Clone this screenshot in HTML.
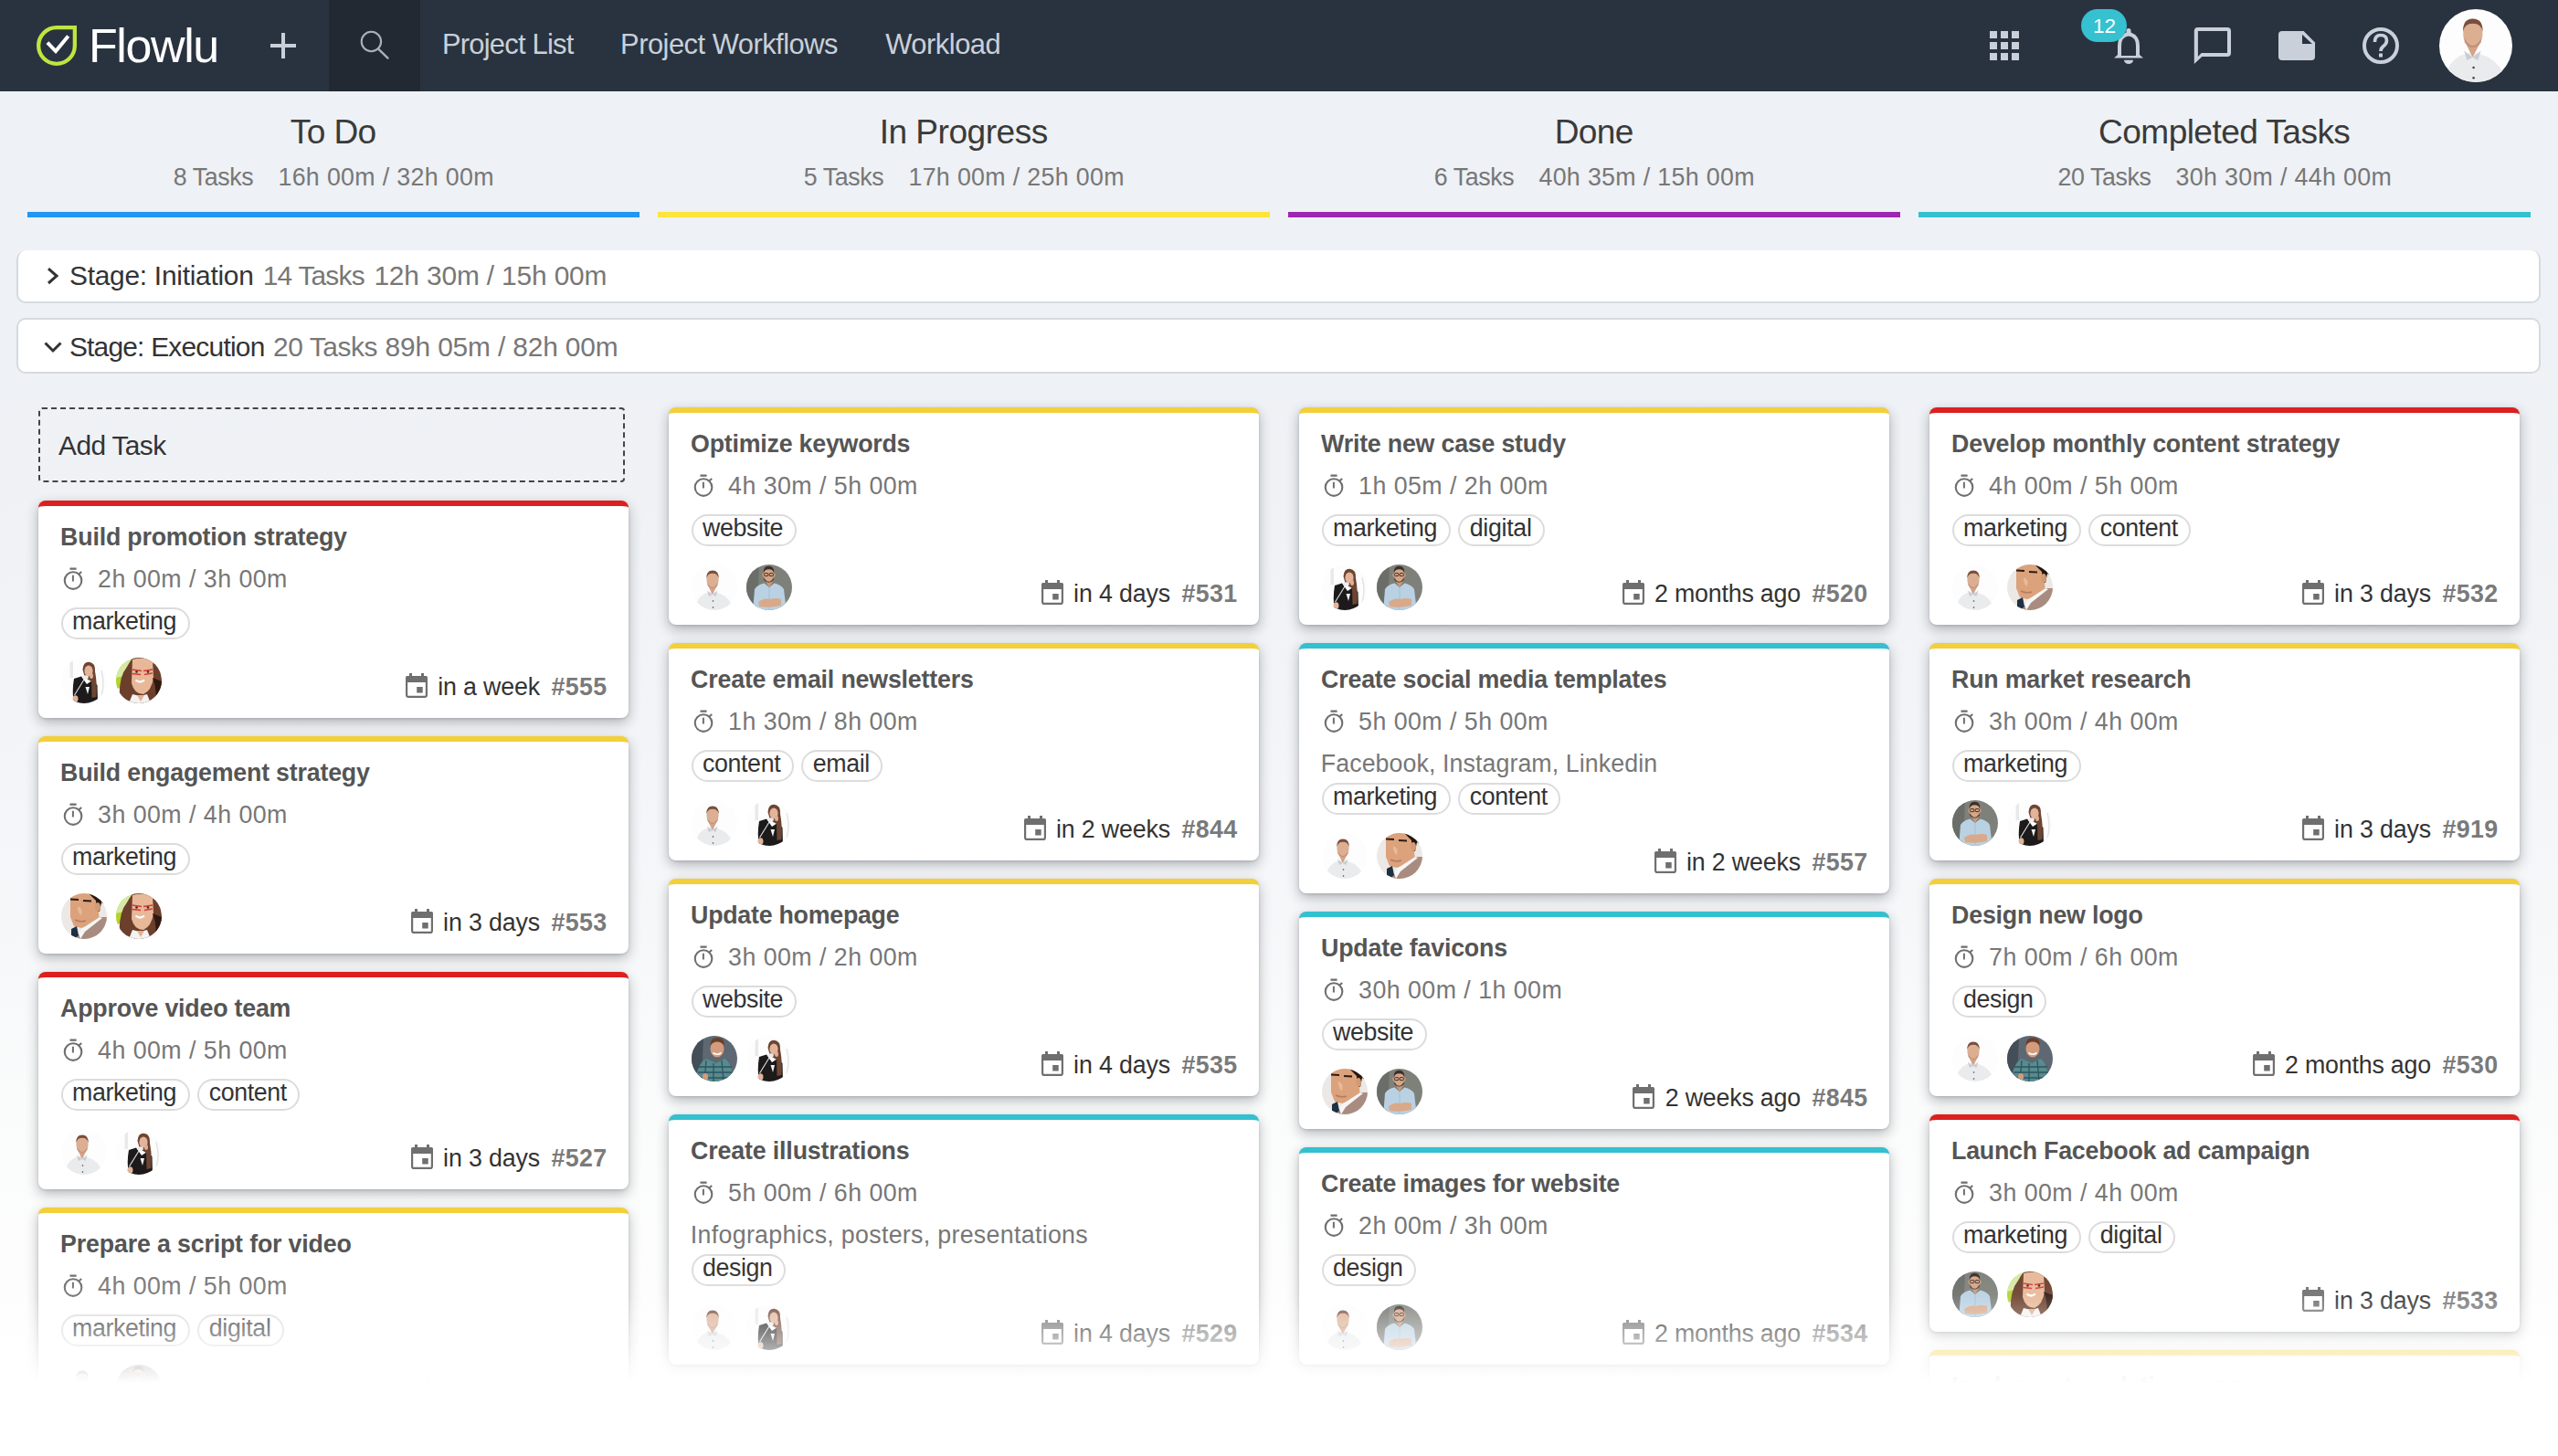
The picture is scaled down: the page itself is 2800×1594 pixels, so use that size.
<!DOCTYPE html>
<html><head><meta charset="utf-8"><title>Flowlu</title>
<style>
*{margin:0;padding:0;box-sizing:border-box}
html,body{width:2800px;height:1594px;overflow:hidden}
body{position:relative;font-family:"Liberation Sans",sans-serif;
 background:linear-gradient(to bottom,#eef1f5 0px,#eef1f5 400px,#f1f3f6 700px,#f6f7f9 1000px,#fafbfb 1200px,#fdfdfd 1400px,#ffffff 1500px)}
.t{position:absolute;line-height:1;white-space:nowrap}
.ic{position:absolute;overflow:visible}
.nav{position:absolute;left:0;top:0;width:2800px;height:100px;background:#29333f}
.search{position:absolute;left:360px;top:0;width:100px;height:100px;background:#222933}
.line{position:absolute;top:232px;height:6px;width:670px}
.stage{position:absolute;left:18px;width:2763px;background:#fff;border:2px solid #d6dadf;border-radius:10px}
.card{position:absolute;width:646px;background:#fff;border-radius:8px;border-top:6px solid;
 box-shadow:0 5px 14px rgba(20,25,35,.3),0 1px 3px rgba(20,25,35,.15)}
.tag{position:absolute;height:35px;border:2px solid #dcdcdc;border-radius:18px;font-size:26px;line-height:26px;color:#333;padding-left:10.5px;white-space:nowrap}
.av{position:absolute}
.fade{position:absolute;left:0;top:1380px;width:2800px;height:214px;
 background:linear-gradient(to bottom,rgba(255,255,255,0) 0px,rgba(255,255,255,.08) 38px,rgba(255,255,255,.5) 83px,rgba(255,255,255,.82) 114px,#fff 134px)}
</style></head><body>

<svg width="0" height="0" style="position:absolute">
<defs>
<clipPath id="cc"><circle cx="25" cy="25" r="25"/></clipPath>
<symbol id="avA" viewBox="0 0 50 50"><g clip-path="url(#cc)">
 <rect width="50" height="50" fill="#fdfdfd"/>
 <path d="M3,52 Q5,36 15,31.5 L22.5,29.5 L30,31.5 Q42,35 47,52 Z" fill="#e9ebed"/>
 <path d="M18.5,24 L22.8,33 L27.5,24 Z" fill="#d4a286"/>
 <path d="M17,28.5 L22.8,33 L19,35 Z M28.5,28.5 L22.8,33 L26.5,35 Z" fill="#c9cdd1"/>
 <ellipse cx="23" cy="16.8" rx="6.6" ry="9.6" fill="#dcae92"/>
 <path d="M16.3,15.5 Q16,6.5 23,6.5 Q30,6.5 29.7,15.5 Q28.8,9.8 23,9.8 Q17.2,9.8 16.3,15.5 Z" fill="#7a4e3c"/>
 <path d="M17.2,20 Q23,30 28.8,20 L28.6,23 Q23,29.5 17.4,23 Z" fill="#a8765e" opacity=".55"/>
 <circle cx="23.5" cy="40" r=".8" fill="#444"/><circle cx="23.5" cy="47" r=".8" fill="#444"/>
</g></symbol>
<symbol id="avB" viewBox="0 0 50 50"><g clip-path="url(#cc)">
 <rect width="50" height="50" fill="#fdfdfd"/>
 <rect x="9.5" y="0" width="3.5" height="22" fill="#e9e9ea"/>
 <path d="M44,14 Q48,28 44,42" stroke="#e4e4e6" stroke-width="1.5" fill="none"/>
 <path d="M14,23 L22,20.5 L28,29 L34,25 L39.5,30 L40,50 L14,50 Q11.5,37 14,23 Z" fill="#1c1a1a"/>
 <path d="M23.5,13 Q24,4.5 30.5,4.8 Q37.5,5.5 37,15 Q39.5,28 38.5,43 L33.5,44 L33,26 L26,22 Z" fill="#6d4533"/>
 <ellipse cx="30" cy="14.5" rx="4.6" ry="6" fill="#e3b49a"/>
 <path d="M26.5,32 L29,40 L31,32 Z" fill="#f2f2f2"/>
 <ellipse cx="26.5" cy="21.5" rx="3.3" ry="2.3" fill="#ececec"/>
 <ellipse cx="33" cy="20" rx="2" ry="3" fill="#dfae94"/>
 <path d="M25,24 L14.5,41" stroke="#e2e2e2" stroke-width="1.1"/>
 <ellipse cx="15.5" cy="45" rx="3" ry="3.8" fill="#e2b49a"/>
</g></symbol>
<symbol id="avC" viewBox="0 0 50 50"><g clip-path="url(#cc)">
 <rect width="50" height="50" fill="#efefef"/>
 <path d="M0,0 L19,0 L16,14 L10,32 L0,34 Z" fill="#b4d22a"/>
 <path d="M0,0 L19,0 L17,10 L8,20 L0,22 Z" fill="#d6e9a4"/>
 <path d="M4,50 Q2,22 12,10 Q17,1 19,0 L41,0 Q51,10 50,30 L49,50 Z" fill="#6b3f2c"/>
 <path d="M18,2 Q29,-1 40,3 L41,22 Q39,36 30,40 Q20,40 17,28 Z" fill="#e8b898"/>
 <path d="M17.5,13 L28,14.5 M30,14.5 L40,13 M17.5,17.5 L27,18.5 M31,18.5 L40,17" stroke="#d63a38" stroke-width="1.4"/>
 <circle cx="22.5" cy="15.5" r="1.3" fill="#3a2a24"/><circle cx="35" cy="15.5" r="1.3" fill="#3a2a24"/>
 <path d="M21.5,24.5 Q26,28.5 31,24.5" stroke="#fff" stroke-width="2.2" fill="none"/>
 <path d="M40,22 Q46,36 42,50 L50,50 L50,26 Z" fill="#2e1810"/>
 <path d="M14,50 L18,40 L26,42 L34,40 L38,50 Z" fill="#f3f3f3"/>
 <path d="M23,41 L27,48 L31,41 Z" fill="#e2b090"/>
</g></symbol>
<symbol id="avD" viewBox="0 0 50 50"><g clip-path="url(#cc)">
 <rect width="50" height="50" fill="#ece8e5"/>
 <path d="M10,0 L32,0 L40,8 L41.5,26 L34,34 L22,38 L14,36 L10,26 Z" fill="#dba27c"/>
 <path d="M18,14 Q24,16 22,24 Q18,22 18,14 Z" fill="#e9bc98"/>
 <path d="M30,0 L50,0 L50,14 L44,10 L42,20 L39,19 L38,8 Z" fill="#24160f"/>
 <ellipse cx="40" cy="15" rx="3" ry="5" fill="#d49a74"/>
 <path d="M10,6.5 L19,7 M24,8 L33,8.5" stroke="#2e1c14" stroke-width="2.2"/>
 <path d="M15,29 Q21,32 27,30" stroke="#b87a62" stroke-width="1.5" fill="none"/>
 <path d="M16,50 L22,40 L42,26 L50,26 L50,50 Z" fill="#a98c80"/>
 <path d="M19,44 L22,39 L42,26 L45,27 L26,42 L21,50 Z" fill="#f6f6f6"/>
 <path d="M11,39 L17,36 L19,46 L15,50 L11,46 Z" fill="#1e3142"/>
</g></symbol>
<symbol id="avE" viewBox="0 0 50 50"><g clip-path="url(#cc)">
 <rect width="50" height="50" fill="#7e807a"/>
 <path d="M0,0 L14,0 L12,50 L0,50 Z" fill="#6b6d69"/>
 <path d="M7,52 L9,27 Q12,22 19.5,20.5 L25,25 L30.5,20.5 Q38,22 41,27 L44,52 Z" fill="#b9d1e2"/>
 <path d="M25,25 L25,50" stroke="#9fbcd0" stroke-width=".8"/>
 <path d="M21,18.5 L25,25 L29,18.5 Z" fill="#c99a7c"/>
 <ellipse cx="18.6" cy="11.5" rx="1.3" ry="2.2" fill="#c99474"/><ellipse cx="30.4" cy="11.5" rx="1.3" ry="2.2" fill="#c99474"/>
 <ellipse cx="24.5" cy="11" rx="5.6" ry="8.4" fill="#d6a586"/>
 <path d="M18.8,9.5 Q18.2,1.8 24.5,1.8 Q30.8,1.8 30.2,9.5 Q29,5.2 24.5,5.2 Q20,5.2 18.8,9.5 Z" fill="#3b2f29"/>
 <path d="M19.3,14.5 Q24.5,23 29.7,14.5 L29.8,17 Q24.5,22.5 19.2,17 Z" fill="#54423a"/>
 <rect x="19.6" y="9.6" width="4.2" height="3" rx=".8" fill="none" stroke="#2a2422" stroke-width=".9"/>
 <rect x="25.2" y="9.6" width="4.2" height="3" rx=".8" fill="none" stroke="#2a2422" stroke-width=".9"/>
 <path d="M13,41 Q20,36 26,38 Q32,36 38,38 L38,45 Q25,48 14,46 Z" fill="#d9a98a"/>
</g></symbol>
<symbol id="avF" viewBox="0 0 50 50"><g clip-path="url(#cc)">
 <rect width="50" height="50" fill="#5d6873"/>
 <path d="M0,0 L13,0 L11,50 L0,50 Z" fill="#434e58"/>
 <path d="M4,52 Q6,30 16,25 L27,30 L36,25 Q44,28 46,52 Z" fill="#578b8d"/>
 <path d="M8,34 L44,34 M7,40 L45,40 M7,46 L45,46 M16,27 L14,50 M24,30 L24,50 M33,27 L35,50" stroke="#2f5362" stroke-width="1.3"/>
 <ellipse cx="28" cy="14" rx="7.5" ry="9.5" fill="#d39c7c"/>
 <path d="M20.5,11 Q20,2 28.5,2 Q37,2.5 35.5,11 Q33,6.5 28,6.5 Q23,6.5 20.5,11 Z" fill="#6a3f28"/>
 <path d="M23.5,18.5 Q28,22 32.5,18.5" stroke="#fff" stroke-width="1.6" fill="none"/>
 <ellipse cx="15" cy="45" rx="3" ry="4" fill="#d39c7c"/>
</g></symbol>
</defs></svg>
<div class="nav"></div><div class="search"></div>
<svg class="ic" style="left:40px;top:28px" width="44" height="44" viewBox="0 0 44 44"><path d="M22,2.15 L41.85,2.15 L41.85,22 A19.85,19.85 0 1 1 22,2.15 Z" fill="none" stroke="#bde640" stroke-width="4.3"/><path d="M11.9,18.7 L21,28.1 L34.7,11.4" fill="none" stroke="#fff" stroke-width="4"/></svg>
<div class="t" style="left:97.0px;top:23.8px;font-size:52.00px;letter-spacing:-1.40px;color:#fff;">Flowlu</div>
<div style="position:absolute;left:296px;top:48px;width:28px;height:4px;background:#c9d0d9"></div><div style="position:absolute;left:308px;top:36px;width:4px;height:28px;background:#c9d0d9"></div>
<svg class="ic" style="left:380px;top:20px" width="60" height="60" viewBox="380 20 60 60"><circle cx="406.4" cy="45.5" r="10.7" fill="none" stroke="#a9b2bc" stroke-width="2.1"/><path d="M414.2,53.6 L424.5,63.6" stroke="#a9b2bc" stroke-width="2.3" stroke-linecap="round"/></svg>
<div class="t" style="left:484.0px;top:34.4px;font-size:30.90px;letter-spacing:-0.77px;color:#c9d0da;">Project List</div>
<div class="t" style="left:679.1px;top:34.4px;font-size:30.90px;letter-spacing:-0.52px;color:#c9d0da;">Project Workflows</div>
<div class="t" style="left:969.2px;top:34.4px;font-size:30.90px;letter-spacing:-0.48px;color:#c9d0da;">Workload</div>
<svg class="ic" style="left:0;top:0" width="2800" height="100" viewBox="0 0 2800 100"><rect x="2178" y="34" width="8" height="8" fill="#c9d0da"/><rect x="2178" y="46" width="8" height="8" fill="#c9d0da"/><rect x="2178" y="58" width="8" height="8" fill="#c9d0da"/><rect x="2190" y="34" width="8" height="8" fill="#c9d0da"/><rect x="2190" y="46" width="8" height="8" fill="#c9d0da"/><rect x="2190" y="58" width="8" height="8" fill="#c9d0da"/><rect x="2202" y="34" width="8" height="8" fill="#c9d0da"/><rect x="2202" y="46" width="8" height="8" fill="#c9d0da"/><rect x="2202" y="58" width="8" height="8" fill="#c9d0da"/><path d="M2330,31 a2.5,2.5 0 0 1 2.5,2.5 v2 Q2342,39 2342,50 v10 l4,3.5 h-32 l4,-3.5 v-10 Q2318,39 2327.5,35.5 v-2 A2.5,2.5 0 0 1 2330,31 Z" fill="#c9d0da"/><path d="M2330,39.5 Q2338,40.5 2338,50 v11 h-16 v-11 Q2322,40.5 2330,39.5 Z" fill="#29333f"/><path d="M2325,65.7 h10 a5,4.3 0 0 1 -10,0 Z" fill="#c9d0da"/><path fill-rule="evenodd" d="M2401.8,70.1 L2401.8,34 Q2401.8,30 2405.8,30 L2438,30 Q2442,30 2442,34 L2442,57.9 Q2442,61.9 2438,61.9 L2410.3,61.9 Z M2405.9,62 L2405.9,34 L2438,34 L2438,58.1 L2409.7,58.1 Z" fill="#c9d0da"/><path d="M2498,34 H2521.6 L2534,46.4 V62 a4,4 0 0 1 -4,4 H2498 a4,4 0 0 1 -4,-4 V38 a4,4 0 0 1 4,-4 Z" fill="#c9d0da"/><path d="M2520,37.8 V47.9 H2530.9 Z" fill="#29333f"/><circle cx="2606" cy="50" r="18" fill="none" stroke="#c9d0da" stroke-width="4"/><path d="M2599.5,46 Q2599.5,38.5 2606,38.5 Q2612.5,38.5 2612.5,44.5 Q2612.5,48 2608.5,51 Q2606,53 2606,56" fill="none" stroke="#c9d0da" stroke-width="3.6"/><rect x="2604" y="58.5" width="4" height="4" fill="#c9d0da"/></svg>
<div style="position:absolute;left:2278px;top:10px;width:50px;height:36px;border-radius:18px;background:#35c1d0"></div>
<div class="t" style="left:2291.0px;top:18.2px;font-size:22.50px;letter-spacing:0.00px;color:#fff;">12</div>
<svg class="av" style="left:2670px;top:10px" width="80" height="80" viewBox="0 0 50 50"><use href="#avA"/></svg>
<div class="t" style="left:364.7px;transform:translateX(-50%);top:126.3px;font-size:37.08px;letter-spacing:-0.59px;color:#3a3a3a;">To Do</div>
<div class="t" style="left:189.8px;top:181.4px;font-size:26.78px;letter-spacing:-0.39px;color:#777;">8 Tasks</div>
<div class="t" style="left:304.4px;top:181.4px;font-size:26.78px;letter-spacing:0.35px;color:#777;">16h 00m / 32h 00m</div>
<div class="line" style="left:30px;background:#2196f3"></div>
<div class="t" style="left:1054.7px;transform:translateX(-50%);top:126.3px;font-size:37.08px;letter-spacing:-0.50px;color:#3a3a3a;">In Progress</div>
<div class="t" style="left:879.8px;top:181.4px;font-size:26.78px;letter-spacing:-0.39px;color:#777;">5 Tasks</div>
<div class="t" style="left:994.4px;top:181.4px;font-size:26.78px;letter-spacing:0.35px;color:#777;">17h 00m / 25h 00m</div>
<div class="line" style="left:720px;background:#fde53a"></div>
<div class="t" style="left:1744.7px;transform:translateX(-50%);top:126.3px;font-size:37.08px;letter-spacing:-0.65px;color:#3a3a3a;">Done</div>
<div class="t" style="left:1569.8px;top:181.4px;font-size:26.78px;letter-spacing:-0.39px;color:#777;">6 Tasks</div>
<div class="t" style="left:1684.4px;top:181.4px;font-size:26.78px;letter-spacing:0.35px;color:#777;">40h 35m / 15h 00m</div>
<div class="line" style="left:1410px;background:#9c27b0"></div>
<div class="t" style="left:2434.7px;transform:translateX(-50%);top:126.3px;font-size:37.08px;letter-spacing:-0.56px;color:#3a3a3a;">Completed Tasks</div>
<div class="t" style="left:2252.6px;top:181.4px;font-size:26.78px;letter-spacing:-0.40px;color:#777;">20 Tasks</div>
<div class="t" style="left:2381.6px;top:181.4px;font-size:26.78px;letter-spacing:0.35px;color:#777;">30h 30m / 44h 00m</div>
<div class="line" style="left:2100px;background:#33c1cf"></div>
<div class="stage" style="top:274px;height:58px;border-top:0"></div>
<div class="stage" style="top:348px;height:61px"></div>
<svg class="ic" style="left:0;top:0" width="100" height="420" viewBox="0 0 100 420"><path d="M53,294.2 L62,302.1 L53,310" fill="none" stroke="#333" stroke-width="3"/><path d="M49.5,375.5 L58,384 L66.5,375.5" fill="none" stroke="#333" stroke-width="3"/></svg>
<div class="t" style="left:76.0px;top:286.8px;font-size:29.87px;letter-spacing:-0.25px;color:#333;">Stage: Initiation</div>
<div class="t" style="left:287.8px;top:286.8px;font-size:29.87px;letter-spacing:-0.79px;color:#777;">14 Tasks</div>
<div class="t" style="left:409.4px;top:286.8px;font-size:29.87px;letter-spacing:-0.14px;color:#777;">12h 30m / 15h 00m</div>
<div class="t" style="left:75.9px;top:364.6px;font-size:29.87px;letter-spacing:-0.76px;color:#333;">Stage: Execution</div>
<div class="t" style="left:299.1px;top:364.6px;font-size:29.87px;letter-spacing:-0.44px;color:#777;">20 Tasks</div>
<div class="t" style="left:421.6px;top:364.6px;font-size:29.87px;letter-spacing:-0.14px;color:#777;">89h 05m / 82h 00m</div>
<div style="position:absolute;left:42px;top:445.5px;width:642px;height:82.5px;border:2px dashed #444;border-radius:4px"></div>
<div class="t" style="left:64.1px;top:472.7px;font-size:29.87px;letter-spacing:-0.61px;color:#333;">Add Task</div>
<div class="card" style="left:42px;top:548px;height:238px;border-top-color:#dc1f1f"></div>
<div class="t" style="left:66.1px;top:574.9px;font-size:26.78px;letter-spacing:-0.19px;color:#555;font-weight:700;">Build promotion strategy</div>
<svg class="ic" style="left:67.9px;top:618.5px" width="24" height="28" viewBox="0 0 24 28"><circle cx="12.05" cy="16.55" r="9.3" fill="none" stroke="#6f6f6f" stroke-width="2.1"/><rect x="8.5" y="2.5" width="7.1" height="2.3" fill="#6f6f6f"/><rect x="10.9" y="10.7" width="2" height="6.8" fill="#6f6f6f"/><path d="M18.6,9.3 L21.2,6.9" stroke="#6f6f6f" stroke-width="2.1"/></svg><div class="t" style="left:107.1px;top:621.4px;font-size:26.78px;letter-spacing:0.46px;color:#777;">2h 00m / 3h 00m</div>
<div class="tag" style="left:66.5px;top:664.5px;width:141.2px;font-size:26.78px;letter-spacing:-0.38px">marketing</div>
<svg class="av" style="left:67px;top:720px" width="50" height="50"><use href="#avB"/></svg>
<svg class="av" style="left:127px;top:720px" width="50" height="50"><use href="#avC"/></svg>
<div class="t" style="left:603.5px;top:739.1px;font-size:26.78px;letter-spacing:0.37px;color:#7a7a7a;font-weight:700;">#555</div>
<div class="t" style="left:479.3px;top:739.1px;font-size:26.78px;letter-spacing:-0.17px;color:#333;">in a week</div>
<svg class="ic" style="left:443.8px;top:737.0px" width="24" height="27" viewBox="0 0 24 27"><rect x="1.1" y="4.1" width="21.8" height="21.8" rx="2" fill="none" stroke="#6f6f6f" stroke-width="2.2"/><rect x="0" y="3" width="24" height="7" rx="2" fill="#6f6f6f"/><rect x="4" y="0" width="3" height="4" fill="#6f6f6f"/><rect x="17" y="0" width="3" height="4" fill="#6f6f6f"/><rect x="12.2" y="15" width="6.5" height="6.5" fill="#6f6f6f"/></svg><div class="card" style="left:42px;top:806px;height:238px;border-top-color:#f3cf3a"></div>
<div class="t" style="left:66.1px;top:832.9px;font-size:26.78px;letter-spacing:-0.20px;color:#555;font-weight:700;">Build engagement strategy</div>
<svg class="ic" style="left:67.9px;top:876.5px" width="24" height="28" viewBox="0 0 24 28"><circle cx="12.05" cy="16.55" r="9.3" fill="none" stroke="#6f6f6f" stroke-width="2.1"/><rect x="8.5" y="2.5" width="7.1" height="2.3" fill="#6f6f6f"/><rect x="10.9" y="10.7" width="2" height="6.8" fill="#6f6f6f"/><path d="M18.6,9.3 L21.2,6.9" stroke="#6f6f6f" stroke-width="2.1"/></svg><div class="t" style="left:107.1px;top:879.4px;font-size:26.78px;letter-spacing:0.46px;color:#777;">3h 00m / 4h 00m</div>
<div class="tag" style="left:66.5px;top:922.5px;width:141.2px;font-size:26.78px;letter-spacing:-0.38px">marketing</div>
<svg class="av" style="left:67px;top:978px" width="50" height="50"><use href="#avD"/></svg>
<svg class="av" style="left:127px;top:978px" width="50" height="50"><use href="#avC"/></svg>
<div class="t" style="left:603.5px;top:997.1px;font-size:26.78px;letter-spacing:0.37px;color:#7a7a7a;font-weight:700;">#553</div>
<div class="t" style="left:485.1px;top:997.1px;font-size:26.78px;letter-spacing:-0.15px;color:#333;">in 3 days</div>
<svg class="ic" style="left:449.6px;top:995.0px" width="24" height="27" viewBox="0 0 24 27"><rect x="1.1" y="4.1" width="21.8" height="21.8" rx="2" fill="none" stroke="#6f6f6f" stroke-width="2.2"/><rect x="0" y="3" width="24" height="7" rx="2" fill="#6f6f6f"/><rect x="4" y="0" width="3" height="4" fill="#6f6f6f"/><rect x="17" y="0" width="3" height="4" fill="#6f6f6f"/><rect x="12.2" y="15" width="6.5" height="6.5" fill="#6f6f6f"/></svg><div class="card" style="left:42px;top:1064px;height:238px;border-top-color:#dc1f1f"></div>
<div class="t" style="left:66.1px;top:1090.9px;font-size:26.78px;letter-spacing:-0.21px;color:#555;font-weight:700;">Approve video team</div>
<svg class="ic" style="left:67.9px;top:1134.5px" width="24" height="28" viewBox="0 0 24 28"><circle cx="12.05" cy="16.55" r="9.3" fill="none" stroke="#6f6f6f" stroke-width="2.1"/><rect x="8.5" y="2.5" width="7.1" height="2.3" fill="#6f6f6f"/><rect x="10.9" y="10.7" width="2" height="6.8" fill="#6f6f6f"/><path d="M18.6,9.3 L21.2,6.9" stroke="#6f6f6f" stroke-width="2.1"/></svg><div class="t" style="left:107.1px;top:1137.4px;font-size:26.78px;letter-spacing:0.46px;color:#777;">4h 00m / 5h 00m</div>
<div class="tag" style="left:66.5px;top:1180.5px;width:141.2px;font-size:26.78px;letter-spacing:-0.38px">marketing</div>
<div class="tag" style="left:216.2px;top:1180.5px;width:112.3px;font-size:26.78px;letter-spacing:-0.37px">content</div>
<svg class="av" style="left:67px;top:1236px" width="50" height="50"><use href="#avA"/></svg>
<svg class="av" style="left:127px;top:1236px" width="50" height="50"><use href="#avB"/></svg>
<div class="t" style="left:603.5px;top:1255.1px;font-size:26.78px;letter-spacing:0.37px;color:#7a7a7a;font-weight:700;">#527</div>
<div class="t" style="left:485.1px;top:1255.1px;font-size:26.78px;letter-spacing:-0.15px;color:#333;">in 3 days</div>
<svg class="ic" style="left:449.6px;top:1253.0px" width="24" height="27" viewBox="0 0 24 27"><rect x="1.1" y="4.1" width="21.8" height="21.8" rx="2" fill="none" stroke="#6f6f6f" stroke-width="2.2"/><rect x="0" y="3" width="24" height="7" rx="2" fill="#6f6f6f"/><rect x="4" y="0" width="3" height="4" fill="#6f6f6f"/><rect x="17" y="0" width="3" height="4" fill="#6f6f6f"/><rect x="12.2" y="15" width="6.5" height="6.5" fill="#6f6f6f"/></svg><div class="card" style="left:42px;top:1322px;height:238px;border-top-color:#f3cf3a"></div>
<div class="t" style="left:66.1px;top:1348.9px;font-size:26.78px;letter-spacing:-0.16px;color:#555;font-weight:700;">Prepare a script for video</div>
<svg class="ic" style="left:67.9px;top:1392.5px" width="24" height="28" viewBox="0 0 24 28"><circle cx="12.05" cy="16.55" r="9.3" fill="none" stroke="#6f6f6f" stroke-width="2.1"/><rect x="8.5" y="2.5" width="7.1" height="2.3" fill="#6f6f6f"/><rect x="10.9" y="10.7" width="2" height="6.8" fill="#6f6f6f"/><path d="M18.6,9.3 L21.2,6.9" stroke="#6f6f6f" stroke-width="2.1"/></svg><div class="t" style="left:107.1px;top:1395.4px;font-size:26.78px;letter-spacing:0.46px;color:#777;">4h 00m / 5h 00m</div>
<div class="tag" style="left:66.5px;top:1438.5px;width:141.2px;font-size:26.78px;letter-spacing:-0.38px">marketing</div>
<div class="tag" style="left:216.2px;top:1438.5px;width:94.9px;font-size:26.78px;letter-spacing:-0.29px">digital</div>
<svg class="av" style="left:67px;top:1494px" width="50" height="50"><use href="#avA"/></svg>
<svg class="av" style="left:127px;top:1494px" width="50" height="50"><use href="#avE"/></svg>
<div class="t" style="left:603.5px;top:1513.1px;font-size:26.78px;letter-spacing:0.37px;color:#7a7a7a;font-weight:700;">#528</div>
<div class="t" style="left:485.1px;top:1513.1px;font-size:26.78px;letter-spacing:-0.15px;color:#333;">in 3 days</div>
<svg class="ic" style="left:449.6px;top:1511.0px" width="24" height="27" viewBox="0 0 24 27"><rect x="1.1" y="4.1" width="21.8" height="21.8" rx="2" fill="none" stroke="#6f6f6f" stroke-width="2.2"/><rect x="0" y="3" width="24" height="7" rx="2" fill="#6f6f6f"/><rect x="4" y="0" width="3" height="4" fill="#6f6f6f"/><rect x="17" y="0" width="3" height="4" fill="#6f6f6f"/><rect x="12.2" y="15" width="6.5" height="6.5" fill="#6f6f6f"/></svg><div class="card" style="left:732px;top:446px;height:238px;border-top-color:#f3cf3a"></div>
<div class="t" style="left:756.1px;top:472.9px;font-size:26.78px;letter-spacing:-0.22px;color:#555;font-weight:700;">Optimize keywords</div>
<svg class="ic" style="left:757.9px;top:516.5px" width="24" height="28" viewBox="0 0 24 28"><circle cx="12.05" cy="16.55" r="9.3" fill="none" stroke="#6f6f6f" stroke-width="2.1"/><rect x="8.5" y="2.5" width="7.1" height="2.3" fill="#6f6f6f"/><rect x="10.9" y="10.7" width="2" height="6.8" fill="#6f6f6f"/><path d="M18.6,9.3 L21.2,6.9" stroke="#6f6f6f" stroke-width="2.1"/></svg><div class="t" style="left:797.1px;top:519.4px;font-size:26.78px;letter-spacing:0.46px;color:#777;">4h 30m / 5h 00m</div>
<div class="tag" style="left:756.5px;top:562.5px;width:115.2px;font-size:26.78px;letter-spacing:-0.38px">website</div>
<svg class="av" style="left:757px;top:618px" width="50" height="50"><use href="#avA"/></svg>
<svg class="av" style="left:817px;top:618px" width="50" height="50"><use href="#avE"/></svg>
<div class="t" style="left:1293.5px;top:637.1px;font-size:26.78px;letter-spacing:0.37px;color:#7a7a7a;font-weight:700;">#531</div>
<div class="t" style="left:1175.1px;top:637.1px;font-size:26.78px;letter-spacing:-0.15px;color:#333;">in 4 days</div>
<svg class="ic" style="left:1139.6px;top:635.0px" width="24" height="27" viewBox="0 0 24 27"><rect x="1.1" y="4.1" width="21.8" height="21.8" rx="2" fill="none" stroke="#6f6f6f" stroke-width="2.2"/><rect x="0" y="3" width="24" height="7" rx="2" fill="#6f6f6f"/><rect x="4" y="0" width="3" height="4" fill="#6f6f6f"/><rect x="17" y="0" width="3" height="4" fill="#6f6f6f"/><rect x="12.2" y="15" width="6.5" height="6.5" fill="#6f6f6f"/></svg><div class="card" style="left:732px;top:704px;height:238px;border-top-color:#f3cf3a"></div>
<div class="t" style="left:756.1px;top:730.9px;font-size:26.78px;letter-spacing:-0.18px;color:#555;font-weight:700;">Create email newsletters</div>
<svg class="ic" style="left:757.9px;top:774.5px" width="24" height="28" viewBox="0 0 24 28"><circle cx="12.05" cy="16.55" r="9.3" fill="none" stroke="#6f6f6f" stroke-width="2.1"/><rect x="8.5" y="2.5" width="7.1" height="2.3" fill="#6f6f6f"/><rect x="10.9" y="10.7" width="2" height="6.8" fill="#6f6f6f"/><path d="M18.6,9.3 L21.2,6.9" stroke="#6f6f6f" stroke-width="2.1"/></svg><div class="t" style="left:797.1px;top:777.4px;font-size:26.78px;letter-spacing:0.46px;color:#777;">1h 30m / 8h 00m</div>
<div class="tag" style="left:756.5px;top:820.5px;width:112.3px;font-size:26.78px;letter-spacing:-0.37px">content</div>
<div class="tag" style="left:877.3px;top:820.5px;width:89.1px;font-size:26.78px;letter-spacing:-0.37px">email</div>
<svg class="av" style="left:757px;top:876px" width="50" height="50"><use href="#avA"/></svg>
<svg class="av" style="left:817px;top:876px" width="50" height="50"><use href="#avB"/></svg>
<div class="t" style="left:1293.5px;top:895.1px;font-size:26.78px;letter-spacing:0.37px;color:#7a7a7a;font-weight:700;">#844</div>
<div class="t" style="left:1156.1px;top:895.1px;font-size:26.78px;letter-spacing:-0.17px;color:#333;">in 2 weeks</div>
<svg class="ic" style="left:1120.6px;top:893.0px" width="24" height="27" viewBox="0 0 24 27"><rect x="1.1" y="4.1" width="21.8" height="21.8" rx="2" fill="none" stroke="#6f6f6f" stroke-width="2.2"/><rect x="0" y="3" width="24" height="7" rx="2" fill="#6f6f6f"/><rect x="4" y="0" width="3" height="4" fill="#6f6f6f"/><rect x="17" y="0" width="3" height="4" fill="#6f6f6f"/><rect x="12.2" y="15" width="6.5" height="6.5" fill="#6f6f6f"/></svg><div class="card" style="left:732px;top:962px;height:238px;border-top-color:#f3cf3a"></div>
<div class="t" style="left:756.1px;top:988.9px;font-size:26.78px;letter-spacing:-0.25px;color:#555;font-weight:700;">Update homepage</div>
<svg class="ic" style="left:757.9px;top:1032.5px" width="24" height="28" viewBox="0 0 24 28"><circle cx="12.05" cy="16.55" r="9.3" fill="none" stroke="#6f6f6f" stroke-width="2.1"/><rect x="8.5" y="2.5" width="7.1" height="2.3" fill="#6f6f6f"/><rect x="10.9" y="10.7" width="2" height="6.8" fill="#6f6f6f"/><path d="M18.6,9.3 L21.2,6.9" stroke="#6f6f6f" stroke-width="2.1"/></svg><div class="t" style="left:797.1px;top:1035.4px;font-size:26.78px;letter-spacing:0.46px;color:#777;">3h 00m / 2h 00m</div>
<div class="tag" style="left:756.5px;top:1078.5px;width:115.2px;font-size:26.78px;letter-spacing:-0.38px">website</div>
<svg class="av" style="left:757px;top:1134px" width="50" height="50"><use href="#avF"/></svg>
<svg class="av" style="left:817px;top:1134px" width="50" height="50"><use href="#avB"/></svg>
<div class="t" style="left:1293.5px;top:1153.1px;font-size:26.78px;letter-spacing:0.37px;color:#7a7a7a;font-weight:700;">#535</div>
<div class="t" style="left:1175.1px;top:1153.1px;font-size:26.78px;letter-spacing:-0.15px;color:#333;">in 4 days</div>
<svg class="ic" style="left:1139.6px;top:1151.0px" width="24" height="27" viewBox="0 0 24 27"><rect x="1.1" y="4.1" width="21.8" height="21.8" rx="2" fill="none" stroke="#6f6f6f" stroke-width="2.2"/><rect x="0" y="3" width="24" height="7" rx="2" fill="#6f6f6f"/><rect x="4" y="0" width="3" height="4" fill="#6f6f6f"/><rect x="17" y="0" width="3" height="4" fill="#6f6f6f"/><rect x="12.2" y="15" width="6.5" height="6.5" fill="#6f6f6f"/></svg><div class="card" style="left:732px;top:1220px;height:274px;border-top-color:#33c0cf"></div>
<div class="t" style="left:756.1px;top:1246.9px;font-size:26.78px;letter-spacing:-0.15px;color:#555;font-weight:700;">Create illustrations</div>
<svg class="ic" style="left:757.9px;top:1290.5px" width="24" height="28" viewBox="0 0 24 28"><circle cx="12.05" cy="16.55" r="9.3" fill="none" stroke="#6f6f6f" stroke-width="2.1"/><rect x="8.5" y="2.5" width="7.1" height="2.3" fill="#6f6f6f"/><rect x="10.9" y="10.7" width="2" height="6.8" fill="#6f6f6f"/><path d="M18.6,9.3 L21.2,6.9" stroke="#6f6f6f" stroke-width="2.1"/></svg><div class="t" style="left:797.1px;top:1293.4px;font-size:26.78px;letter-spacing:0.46px;color:#777;">5h 00m / 6h 00m</div>
<div class="t" style="left:755.8px;top:1338.9px;font-size:26.78px;letter-spacing:0.31px;color:#777;">Infographics, posters, presentations</div>
<div class="tag" style="left:756.5px;top:1372.5px;width:103.6px;font-size:26.78px;letter-spacing:-0.38px">design</div>
<svg class="av" style="left:757px;top:1428px" width="50" height="50"><use href="#avA"/></svg>
<svg class="av" style="left:817px;top:1428px" width="50" height="50"><use href="#avB"/></svg>
<div class="t" style="left:1293.5px;top:1447.1px;font-size:26.78px;letter-spacing:0.37px;color:#7a7a7a;font-weight:700;">#529</div>
<div class="t" style="left:1175.1px;top:1447.1px;font-size:26.78px;letter-spacing:-0.15px;color:#333;">in 4 days</div>
<svg class="ic" style="left:1139.6px;top:1445.0px" width="24" height="27" viewBox="0 0 24 27"><rect x="1.1" y="4.1" width="21.8" height="21.8" rx="2" fill="none" stroke="#6f6f6f" stroke-width="2.2"/><rect x="0" y="3" width="24" height="7" rx="2" fill="#6f6f6f"/><rect x="4" y="0" width="3" height="4" fill="#6f6f6f"/><rect x="17" y="0" width="3" height="4" fill="#6f6f6f"/><rect x="12.2" y="15" width="6.5" height="6.5" fill="#6f6f6f"/></svg><div class="card" style="left:1422px;top:446px;height:238px;border-top-color:#f3cf3a"></div>
<div class="t" style="left:1446.1px;top:472.9px;font-size:26.78px;letter-spacing:-0.20px;color:#555;font-weight:700;">Write new case study</div>
<svg class="ic" style="left:1447.9px;top:516.5px" width="24" height="28" viewBox="0 0 24 28"><circle cx="12.05" cy="16.55" r="9.3" fill="none" stroke="#6f6f6f" stroke-width="2.1"/><rect x="8.5" y="2.5" width="7.1" height="2.3" fill="#6f6f6f"/><rect x="10.9" y="10.7" width="2" height="6.8" fill="#6f6f6f"/><path d="M18.6,9.3 L21.2,6.9" stroke="#6f6f6f" stroke-width="2.1"/></svg><div class="t" style="left:1487.1px;top:519.4px;font-size:26.78px;letter-spacing:0.46px;color:#777;">1h 05m / 2h 00m</div>
<div class="tag" style="left:1446.5px;top:562.5px;width:141.2px;font-size:26.78px;letter-spacing:-0.38px">marketing</div>
<div class="tag" style="left:1596.2px;top:562.5px;width:94.9px;font-size:26.78px;letter-spacing:-0.29px">digital</div>
<svg class="av" style="left:1447px;top:618px" width="50" height="50"><use href="#avB"/></svg>
<svg class="av" style="left:1507px;top:618px" width="50" height="50"><use href="#avE"/></svg>
<div class="t" style="left:1983.5px;top:637.1px;font-size:26.78px;letter-spacing:0.37px;color:#7a7a7a;font-weight:700;">#520</div>
<div class="t" style="left:1811.0px;top:637.1px;font-size:26.78px;letter-spacing:-0.19px;color:#333;">2 months ago</div>
<svg class="ic" style="left:1775.5px;top:635.0px" width="24" height="27" viewBox="0 0 24 27"><rect x="1.1" y="4.1" width="21.8" height="21.8" rx="2" fill="none" stroke="#6f6f6f" stroke-width="2.2"/><rect x="0" y="3" width="24" height="7" rx="2" fill="#6f6f6f"/><rect x="4" y="0" width="3" height="4" fill="#6f6f6f"/><rect x="17" y="0" width="3" height="4" fill="#6f6f6f"/><rect x="12.2" y="15" width="6.5" height="6.5" fill="#6f6f6f"/></svg><div class="card" style="left:1422px;top:704px;height:274px;border-top-color:#33c0cf"></div>
<div class="t" style="left:1446.1px;top:730.9px;font-size:26.78px;letter-spacing:-0.19px;color:#555;font-weight:700;">Create social media templates</div>
<svg class="ic" style="left:1447.9px;top:774.5px" width="24" height="28" viewBox="0 0 24 28"><circle cx="12.05" cy="16.55" r="9.3" fill="none" stroke="#6f6f6f" stroke-width="2.1"/><rect x="8.5" y="2.5" width="7.1" height="2.3" fill="#6f6f6f"/><rect x="10.9" y="10.7" width="2" height="6.8" fill="#6f6f6f"/><path d="M18.6,9.3 L21.2,6.9" stroke="#6f6f6f" stroke-width="2.1"/></svg><div class="t" style="left:1487.1px;top:777.4px;font-size:26.78px;letter-spacing:0.46px;color:#777;">5h 00m / 5h 00m</div>
<div class="t" style="left:1445.8px;top:822.9px;font-size:26.78px;letter-spacing:0.08px;color:#777;">Facebook, Instagram, Linkedin</div>
<div class="tag" style="left:1446.5px;top:856.5px;width:141.2px;font-size:26.78px;letter-spacing:-0.38px">marketing</div>
<div class="tag" style="left:1596.2px;top:856.5px;width:112.3px;font-size:26.78px;letter-spacing:-0.37px">content</div>
<svg class="av" style="left:1447px;top:912px" width="50" height="50"><use href="#avA"/></svg>
<svg class="av" style="left:1507px;top:912px" width="50" height="50"><use href="#avD"/></svg>
<div class="t" style="left:1983.5px;top:931.1px;font-size:26.78px;letter-spacing:0.37px;color:#7a7a7a;font-weight:700;">#557</div>
<div class="t" style="left:1846.1px;top:931.1px;font-size:26.78px;letter-spacing:-0.17px;color:#333;">in 2 weeks</div>
<svg class="ic" style="left:1810.6px;top:929.0px" width="24" height="27" viewBox="0 0 24 27"><rect x="1.1" y="4.1" width="21.8" height="21.8" rx="2" fill="none" stroke="#6f6f6f" stroke-width="2.2"/><rect x="0" y="3" width="24" height="7" rx="2" fill="#6f6f6f"/><rect x="4" y="0" width="3" height="4" fill="#6f6f6f"/><rect x="17" y="0" width="3" height="4" fill="#6f6f6f"/><rect x="12.2" y="15" width="6.5" height="6.5" fill="#6f6f6f"/></svg><div class="card" style="left:1422px;top:998px;height:238px;border-top-color:#33c0cf"></div>
<div class="t" style="left:1446.1px;top:1024.9px;font-size:26.78px;letter-spacing:-0.20px;color:#555;font-weight:700;">Update favicons</div>
<svg class="ic" style="left:1447.9px;top:1068.5px" width="24" height="28" viewBox="0 0 24 28"><circle cx="12.05" cy="16.55" r="9.3" fill="none" stroke="#6f6f6f" stroke-width="2.1"/><rect x="8.5" y="2.5" width="7.1" height="2.3" fill="#6f6f6f"/><rect x="10.9" y="10.7" width="2" height="6.8" fill="#6f6f6f"/><path d="M18.6,9.3 L21.2,6.9" stroke="#6f6f6f" stroke-width="2.1"/></svg><div class="t" style="left:1487.1px;top:1071.4px;font-size:26.78px;letter-spacing:0.46px;color:#777;">30h 00m / 1h 00m</div>
<div class="tag" style="left:1446.5px;top:1114.5px;width:115.2px;font-size:26.78px;letter-spacing:-0.38px">website</div>
<svg class="av" style="left:1447px;top:1170px" width="50" height="50"><use href="#avD"/></svg>
<svg class="av" style="left:1507px;top:1170px" width="50" height="50"><use href="#avE"/></svg>
<div class="t" style="left:1983.5px;top:1189.1px;font-size:26.78px;letter-spacing:0.37px;color:#7a7a7a;font-weight:700;">#845</div>
<div class="t" style="left:1822.8px;top:1189.1px;font-size:26.78px;letter-spacing:-0.20px;color:#333;">2 weeks ago</div>
<svg class="ic" style="left:1787.3px;top:1187.0px" width="24" height="27" viewBox="0 0 24 27"><rect x="1.1" y="4.1" width="21.8" height="21.8" rx="2" fill="none" stroke="#6f6f6f" stroke-width="2.2"/><rect x="0" y="3" width="24" height="7" rx="2" fill="#6f6f6f"/><rect x="4" y="0" width="3" height="4" fill="#6f6f6f"/><rect x="17" y="0" width="3" height="4" fill="#6f6f6f"/><rect x="12.2" y="15" width="6.5" height="6.5" fill="#6f6f6f"/></svg><div class="card" style="left:1422px;top:1256px;height:238px;border-top-color:#33c0cf"></div>
<div class="t" style="left:1446.1px;top:1282.9px;font-size:26.78px;letter-spacing:-0.19px;color:#555;font-weight:700;">Create images for website</div>
<svg class="ic" style="left:1447.9px;top:1326.5px" width="24" height="28" viewBox="0 0 24 28"><circle cx="12.05" cy="16.55" r="9.3" fill="none" stroke="#6f6f6f" stroke-width="2.1"/><rect x="8.5" y="2.5" width="7.1" height="2.3" fill="#6f6f6f"/><rect x="10.9" y="10.7" width="2" height="6.8" fill="#6f6f6f"/><path d="M18.6,9.3 L21.2,6.9" stroke="#6f6f6f" stroke-width="2.1"/></svg><div class="t" style="left:1487.1px;top:1329.4px;font-size:26.78px;letter-spacing:0.46px;color:#777;">2h 00m / 3h 00m</div>
<div class="tag" style="left:1446.5px;top:1372.5px;width:103.6px;font-size:26.78px;letter-spacing:-0.38px">design</div>
<svg class="av" style="left:1447px;top:1428px" width="50" height="50"><use href="#avA"/></svg>
<svg class="av" style="left:1507px;top:1428px" width="50" height="50"><use href="#avE"/></svg>
<div class="t" style="left:1983.5px;top:1447.1px;font-size:26.78px;letter-spacing:0.37px;color:#7a7a7a;font-weight:700;">#534</div>
<div class="t" style="left:1811.0px;top:1447.1px;font-size:26.78px;letter-spacing:-0.19px;color:#333;">2 months ago</div>
<svg class="ic" style="left:1775.5px;top:1445.0px" width="24" height="27" viewBox="0 0 24 27"><rect x="1.1" y="4.1" width="21.8" height="21.8" rx="2" fill="none" stroke="#6f6f6f" stroke-width="2.2"/><rect x="0" y="3" width="24" height="7" rx="2" fill="#6f6f6f"/><rect x="4" y="0" width="3" height="4" fill="#6f6f6f"/><rect x="17" y="0" width="3" height="4" fill="#6f6f6f"/><rect x="12.2" y="15" width="6.5" height="6.5" fill="#6f6f6f"/></svg><div class="card" style="left:2112px;top:446px;height:238px;border-top-color:#dc1f1f"></div>
<div class="t" style="left:2136.1px;top:472.9px;font-size:26.78px;letter-spacing:-0.19px;color:#555;font-weight:700;">Develop monthly content strategy</div>
<svg class="ic" style="left:2137.9px;top:516.5px" width="24" height="28" viewBox="0 0 24 28"><circle cx="12.05" cy="16.55" r="9.3" fill="none" stroke="#6f6f6f" stroke-width="2.1"/><rect x="8.5" y="2.5" width="7.1" height="2.3" fill="#6f6f6f"/><rect x="10.9" y="10.7" width="2" height="6.8" fill="#6f6f6f"/><path d="M18.6,9.3 L21.2,6.9" stroke="#6f6f6f" stroke-width="2.1"/></svg><div class="t" style="left:2177.1px;top:519.4px;font-size:26.78px;letter-spacing:0.46px;color:#777;">4h 00m / 5h 00m</div>
<div class="tag" style="left:2136.5px;top:562.5px;width:141.2px;font-size:26.78px;letter-spacing:-0.38px">marketing</div>
<div class="tag" style="left:2286.2px;top:562.5px;width:112.3px;font-size:26.78px;letter-spacing:-0.37px">content</div>
<svg class="av" style="left:2137px;top:618px" width="50" height="50"><use href="#avA"/></svg>
<svg class="av" style="left:2197px;top:618px" width="50" height="50"><use href="#avD"/></svg>
<div class="t" style="left:2673.5px;top:637.1px;font-size:26.78px;letter-spacing:0.37px;color:#7a7a7a;font-weight:700;">#532</div>
<div class="t" style="left:2555.1px;top:637.1px;font-size:26.78px;letter-spacing:-0.15px;color:#333;">in 3 days</div>
<svg class="ic" style="left:2519.6px;top:635.0px" width="24" height="27" viewBox="0 0 24 27"><rect x="1.1" y="4.1" width="21.8" height="21.8" rx="2" fill="none" stroke="#6f6f6f" stroke-width="2.2"/><rect x="0" y="3" width="24" height="7" rx="2" fill="#6f6f6f"/><rect x="4" y="0" width="3" height="4" fill="#6f6f6f"/><rect x="17" y="0" width="3" height="4" fill="#6f6f6f"/><rect x="12.2" y="15" width="6.5" height="6.5" fill="#6f6f6f"/></svg><div class="card" style="left:2112px;top:704px;height:238px;border-top-color:#f3cf3a"></div>
<div class="t" style="left:2136.1px;top:730.9px;font-size:26.78px;letter-spacing:-0.21px;color:#555;font-weight:700;">Run market research</div>
<svg class="ic" style="left:2137.9px;top:774.5px" width="24" height="28" viewBox="0 0 24 28"><circle cx="12.05" cy="16.55" r="9.3" fill="none" stroke="#6f6f6f" stroke-width="2.1"/><rect x="8.5" y="2.5" width="7.1" height="2.3" fill="#6f6f6f"/><rect x="10.9" y="10.7" width="2" height="6.8" fill="#6f6f6f"/><path d="M18.6,9.3 L21.2,6.9" stroke="#6f6f6f" stroke-width="2.1"/></svg><div class="t" style="left:2177.1px;top:777.4px;font-size:26.78px;letter-spacing:0.46px;color:#777;">3h 00m / 4h 00m</div>
<div class="tag" style="left:2136.5px;top:820.5px;width:141.2px;font-size:26.78px;letter-spacing:-0.38px">marketing</div>
<svg class="av" style="left:2137px;top:876px" width="50" height="50"><use href="#avE"/></svg>
<svg class="av" style="left:2197px;top:876px" width="50" height="50"><use href="#avB"/></svg>
<div class="t" style="left:2673.5px;top:895.1px;font-size:26.78px;letter-spacing:0.37px;color:#7a7a7a;font-weight:700;">#919</div>
<div class="t" style="left:2555.1px;top:895.1px;font-size:26.78px;letter-spacing:-0.15px;color:#333;">in 3 days</div>
<svg class="ic" style="left:2519.6px;top:893.0px" width="24" height="27" viewBox="0 0 24 27"><rect x="1.1" y="4.1" width="21.8" height="21.8" rx="2" fill="none" stroke="#6f6f6f" stroke-width="2.2"/><rect x="0" y="3" width="24" height="7" rx="2" fill="#6f6f6f"/><rect x="4" y="0" width="3" height="4" fill="#6f6f6f"/><rect x="17" y="0" width="3" height="4" fill="#6f6f6f"/><rect x="12.2" y="15" width="6.5" height="6.5" fill="#6f6f6f"/></svg><div class="card" style="left:2112px;top:962px;height:238px;border-top-color:#f3cf3a"></div>
<div class="t" style="left:2136.1px;top:988.9px;font-size:26.78px;letter-spacing:-0.21px;color:#555;font-weight:700;">Design new logo</div>
<svg class="ic" style="left:2137.9px;top:1032.5px" width="24" height="28" viewBox="0 0 24 28"><circle cx="12.05" cy="16.55" r="9.3" fill="none" stroke="#6f6f6f" stroke-width="2.1"/><rect x="8.5" y="2.5" width="7.1" height="2.3" fill="#6f6f6f"/><rect x="10.9" y="10.7" width="2" height="6.8" fill="#6f6f6f"/><path d="M18.6,9.3 L21.2,6.9" stroke="#6f6f6f" stroke-width="2.1"/></svg><div class="t" style="left:2177.1px;top:1035.4px;font-size:26.78px;letter-spacing:0.46px;color:#777;">7h 00m / 6h 00m</div>
<div class="tag" style="left:2136.5px;top:1078.5px;width:103.6px;font-size:26.78px;letter-spacing:-0.38px">design</div>
<svg class="av" style="left:2137px;top:1134px" width="50" height="50"><use href="#avA"/></svg>
<svg class="av" style="left:2197px;top:1134px" width="50" height="50"><use href="#avF"/></svg>
<div class="t" style="left:2673.5px;top:1153.1px;font-size:26.78px;letter-spacing:0.37px;color:#7a7a7a;font-weight:700;">#530</div>
<div class="t" style="left:2501.0px;top:1153.1px;font-size:26.78px;letter-spacing:-0.19px;color:#333;">2 months ago</div>
<svg class="ic" style="left:2465.5px;top:1151.0px" width="24" height="27" viewBox="0 0 24 27"><rect x="1.1" y="4.1" width="21.8" height="21.8" rx="2" fill="none" stroke="#6f6f6f" stroke-width="2.2"/><rect x="0" y="3" width="24" height="7" rx="2" fill="#6f6f6f"/><rect x="4" y="0" width="3" height="4" fill="#6f6f6f"/><rect x="17" y="0" width="3" height="4" fill="#6f6f6f"/><rect x="12.2" y="15" width="6.5" height="6.5" fill="#6f6f6f"/></svg><div class="card" style="left:2112px;top:1220px;height:238px;border-top-color:#dc1f1f"></div>
<div class="t" style="left:2136.1px;top:1246.9px;font-size:26.78px;letter-spacing:-0.23px;color:#555;font-weight:700;">Launch Facebook ad campaign</div>
<svg class="ic" style="left:2137.9px;top:1290.5px" width="24" height="28" viewBox="0 0 24 28"><circle cx="12.05" cy="16.55" r="9.3" fill="none" stroke="#6f6f6f" stroke-width="2.1"/><rect x="8.5" y="2.5" width="7.1" height="2.3" fill="#6f6f6f"/><rect x="10.9" y="10.7" width="2" height="6.8" fill="#6f6f6f"/><path d="M18.6,9.3 L21.2,6.9" stroke="#6f6f6f" stroke-width="2.1"/></svg><div class="t" style="left:2177.1px;top:1293.4px;font-size:26.78px;letter-spacing:0.46px;color:#777;">3h 00m / 4h 00m</div>
<div class="tag" style="left:2136.5px;top:1336.5px;width:141.2px;font-size:26.78px;letter-spacing:-0.38px">marketing</div>
<div class="tag" style="left:2286.2px;top:1336.5px;width:94.9px;font-size:26.78px;letter-spacing:-0.29px">digital</div>
<svg class="av" style="left:2137px;top:1392px" width="50" height="50"><use href="#avE"/></svg>
<svg class="av" style="left:2197px;top:1392px" width="50" height="50"><use href="#avC"/></svg>
<div class="t" style="left:2673.5px;top:1411.1px;font-size:26.78px;letter-spacing:0.37px;color:#7a7a7a;font-weight:700;">#533</div>
<div class="t" style="left:2555.1px;top:1411.1px;font-size:26.78px;letter-spacing:-0.15px;color:#333;">in 3 days</div>
<svg class="ic" style="left:2519.6px;top:1409.0px" width="24" height="27" viewBox="0 0 24 27"><rect x="1.1" y="4.1" width="21.8" height="21.8" rx="2" fill="none" stroke="#6f6f6f" stroke-width="2.2"/><rect x="0" y="3" width="24" height="7" rx="2" fill="#6f6f6f"/><rect x="4" y="0" width="3" height="4" fill="#6f6f6f"/><rect x="17" y="0" width="3" height="4" fill="#6f6f6f"/><rect x="12.2" y="15" width="6.5" height="6.5" fill="#6f6f6f"/></svg><div class="card" style="left:2112px;top:1478px;height:238px;border-top-color:#f3cf3a"></div>
<div class="t" style="left:2136.1px;top:1504.9px;font-size:26.78px;letter-spacing:-0.20px;color:#555;font-weight:700;">Implement analytics program</div>
<svg class="ic" style="left:2137.9px;top:1548.5px" width="24" height="28" viewBox="0 0 24 28"><circle cx="12.05" cy="16.55" r="9.3" fill="none" stroke="#6f6f6f" stroke-width="2.1"/><rect x="8.5" y="2.5" width="7.1" height="2.3" fill="#6f6f6f"/><rect x="10.9" y="10.7" width="2" height="6.8" fill="#6f6f6f"/><path d="M18.6,9.3 L21.2,6.9" stroke="#6f6f6f" stroke-width="2.1"/></svg><div class="t" style="left:2177.1px;top:1551.4px;font-size:26.78px;letter-spacing:0.46px;color:#777;">2h 00m / 3h 00m</div>
<div class="tag" style="left:2136.5px;top:1594.5px;width:141.2px;font-size:26.78px;letter-spacing:-0.38px">marketing</div>
<svg class="av" style="left:2137px;top:1650px" width="50" height="50"><use href="#avA"/></svg>
<svg class="av" style="left:2197px;top:1650px" width="50" height="50"><use href="#avE"/></svg>
<div class="t" style="left:2673.5px;top:1669.1px;font-size:26.78px;letter-spacing:0.37px;color:#7a7a7a;font-weight:700;">#536</div>
<div class="t" style="left:2555.1px;top:1669.1px;font-size:26.78px;letter-spacing:-0.15px;color:#333;">in 3 days</div>
<svg class="ic" style="left:2519.6px;top:1667.0px" width="24" height="27" viewBox="0 0 24 27"><rect x="1.1" y="4.1" width="21.8" height="21.8" rx="2" fill="none" stroke="#6f6f6f" stroke-width="2.2"/><rect x="0" y="3" width="24" height="7" rx="2" fill="#6f6f6f"/><rect x="4" y="0" width="3" height="4" fill="#6f6f6f"/><rect x="17" y="0" width="3" height="4" fill="#6f6f6f"/><rect x="12.2" y="15" width="6.5" height="6.5" fill="#6f6f6f"/></svg><div class="card" style="left:1422px;top:1514px;height:238px;border-top-color:#33c0cf"></div>
<div class="t" style="left:1446.1px;top:1540.9px;font-size:26.78px;letter-spacing:-0.19px;color:#555;font-weight:700;">Create video</div>
<svg class="ic" style="left:1447.9px;top:1584.5px" width="24" height="28" viewBox="0 0 24 28"><circle cx="12.05" cy="16.55" r="9.3" fill="none" stroke="#6f6f6f" stroke-width="2.1"/><rect x="8.5" y="2.5" width="7.1" height="2.3" fill="#6f6f6f"/><rect x="10.9" y="10.7" width="2" height="6.8" fill="#6f6f6f"/><path d="M18.6,9.3 L21.2,6.9" stroke="#6f6f6f" stroke-width="2.1"/></svg><div class="t" style="left:1487.1px;top:1587.4px;font-size:26.78px;letter-spacing:0.46px;color:#777;">2h 00m / 3h 00m</div>
<div class="tag" style="left:1446.5px;top:1630.5px;width:103.6px;font-size:26.78px;letter-spacing:-0.38px">design</div>
<svg class="av" style="left:1447px;top:1686px" width="50" height="50"><use href="#avA"/></svg>
<svg class="av" style="left:1507px;top:1686px" width="50" height="50"><use href="#avE"/></svg>
<div class="t" style="left:1983.5px;top:1705.1px;font-size:26.78px;letter-spacing:0.37px;color:#7a7a7a;font-weight:700;">#537</div>
<div class="t" style="left:1865.1px;top:1705.1px;font-size:26.78px;letter-spacing:-0.15px;color:#333;">in 3 days</div>
<svg class="ic" style="left:1829.6px;top:1703.0px" width="24" height="27" viewBox="0 0 24 27"><rect x="1.1" y="4.1" width="21.8" height="21.8" rx="2" fill="none" stroke="#6f6f6f" stroke-width="2.2"/><rect x="0" y="3" width="24" height="7" rx="2" fill="#6f6f6f"/><rect x="4" y="0" width="3" height="4" fill="#6f6f6f"/><rect x="17" y="0" width="3" height="4" fill="#6f6f6f"/><rect x="12.2" y="15" width="6.5" height="6.5" fill="#6f6f6f"/></svg><div class="fade"></div>
</body></html>
